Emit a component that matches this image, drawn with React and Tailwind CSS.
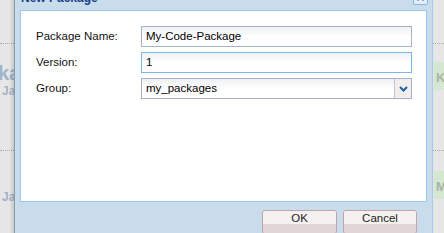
import React from 'react';

const font = { fontFamily: '"Liberation Sans", Arial, sans-serif' };

function Field({ value, focused }) {
  return (
    <div
      className={`h-[21px] flex items-center pl-[4px] text-[11.5px] text-black border bg-gradient-to-b from-[#eef0f2] via-white to-white ${
        focused ? 'border-[#7eb8e6]' : 'border-[#a9b0cc]'
      }`}
    >
      {value}
    </div>
  );
}

function Combo({ value }) {
  return (
    <div className="h-[21px] flex border border-[#a9b0cc] text-[11.5px] text-black">
      <div className="flex-1 flex items-center pl-[4px] bg-gradient-to-b from-[#eef0f2] via-white to-white">
        {value}
      </div>
      <div className="w-[17px] flex items-center justify-center border-l border-[#c2c6d6] bg-[#f2eeee]">
        <svg width="9" height="6" viewBox="0 0 9 6">
          <path d="M1 1 L4.5 4.5 L8 1" fill="none" stroke="#1f5fa3" strokeWidth="2" />
        </svg>
      </div>
    </div>
  );
}

function Btn({ children }) {
  return (
    <button className="h-[24px] border border-[#c4a3a8] rounded-[3px] overflow-hidden flex flex-col text-[11.5px] text-[#222]">
      <span className="h-[13px] w-full bg-[#f4f1f0] flex items-end justify-center leading-none">{children}</span>
      <span className="flex-1 w-full bg-[#e2d5d5]" />
    </button>
  );
}

export default function App() {
  const rows = [
    { label: 'Package Name:', el: <Field value="My-Code-Package" /> },
    { label: 'Version:', el: <Field value="1" focused /> },
    { label: 'Group:', el: <Combo value="my_packages" /> },
  ];

  return (
    <div className="relative w-[444px] h-[233px] overflow-hidden bg-[#e6e6e6]" style={font}>
      {/* page behind the modal */}
      <div className="absolute left-0 top-[43px] w-[444px] border-t border-dotted border-[#a8a8a8]" />
      <div className="absolute left-0 top-[150px] w-[444px] border-t border-dotted border-[#a8a8a8]" />
      <div className="absolute left-[-2px] top-[63px] text-[20px] font-bold text-[#9fb4cc] leading-none">ka</div>
      <div className="absolute left-[2px] top-[85px] text-[12px] font-bold text-[#a3b2c6] leading-none">Ja</div>
      <div className="absolute left-[2px] top-[191px] text-[12px] font-bold text-[#a3b2c6] leading-none">Ja</div>
      <div className="absolute left-[434px] top-[62px] w-[20px] h-[28px] bg-[#d4e7d0] text-[#a8b4a6] text-[13px] font-bold pl-[2px] pt-[6px]">K</div>
      <div className="absolute left-[434px] top-[171px] w-[20px] h-[28px] bg-[#d4e7d0] text-[#a8b4a6] text-[13px] font-bold pl-[2px] pt-[6px]">M</div>

      {/* window */}
      <div className="absolute left-[14px] top-[-17px] w-[419px] h-[270px] bg-[#c8dcec] border-l border-[#8a9db0] border-r border-r-[#a9c9e6] shadow-[-2px_0_3px_rgba(0,0,0,0.15)] flex flex-col">
        <div className="h-[27px] flex items-start justify-between pl-[6px] pr-[4px] pt-[9px]">
          <span className="text-[12px] font-bold text-[#15428b] leading-none">New Package</span>
          <span className="w-[15px] h-[15px] mt-[-2px] rounded-[2px] border border-[#8db2d8] bg-[#e3eef8] flex items-center justify-center">
            <svg width="9" height="9" viewBox="0 0 9 9">
              <path d="M1.5 1.5 L7.5 7.5 M7.5 1.5 L1.5 7.5" stroke="#4b6f96" strokeWidth="1.6" />
            </svg>
          </span>
        </div>
        <div className="mx-[5px] h-[192px] bg-white border border-[#99c8ee] pl-[15px] pr-[14px] pt-[15px] flex flex-col gap-[5px]">
          {rows.map((r) => (
            <div key={r.label} className="flex items-center">
              <div className="w-[105px] text-[11.5px] text-[#111]">{r.label}</div>
              <div className="flex-1">{r.el}</div>
            </div>
          ))}
        </div>
        <div className="flex justify-end gap-[6px] pr-[15px] pt-[8px]">
          <div className="w-[75px] flex flex-col"><Btn>OK</Btn></div>
          <div className="w-[74px] flex flex-col"><Btn>Cancel</Btn></div>
        </div>
      </div>
    </div>
  );
}
